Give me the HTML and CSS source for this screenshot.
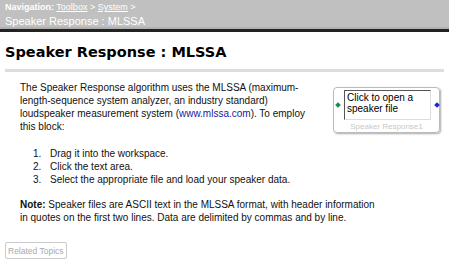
FILE: index.html
```html
<!DOCTYPE html>
<html>
<head>
<meta charset="utf-8">
<link rel="stylesheet" href="styles.css">
</head>
<body>
<div class="nav">
  <div class="nav-line small"><b>Navigation:</b> <a href="#">Toolbox</a> &gt; <a href="#">System</a> &gt;</div>
  <div class="nav-line">Speaker Response : MLSSA</div>
</div>
<h1 class="title">Speaker Response : MLSSA</h1>
<div class="content">
  <div class="intro">
    <p class="intro-text">The Speaker Response algorithm uses the MLSSA (maximum-length-sequence system analyzer, an industry standard) loudspeaker measurement system (<a href="#" class="plain">www.mlssa.com</a>). To employ this block:</p>
    <div class="widget">
      <span class="dot green"></span>
      <div class="textbox">Click to open a speaker file</div>
      <span class="dot blue"></span>
      <div class="wlabel">Speaker Response1</div>
    </div>
  </div>
  <ol class="steps">
    <li><span class="num">1.</span>Drag it into the workspace.</li>
    <li><span class="num">2.</span>Click the text area.</li>
    <li><span class="num">3.</span>Select the appropriate file and load your speaker data.</li>
  </ol>
  <p class="note"><b>Note:</b> Speaker files are ASCII text in the MLSSA format, with header information in quotes on the first two lines. Data are delimited by commas and by line.</p>
</div>
<button class="related">Related Topics</button>
</body>
</html>
```
FILE: styles.css
```css
html, body { margin: 0; padding: 0; background: #fff; }
body { font-family: "Liberation Sans", Tahoma, sans-serif; font-size: 10px; color: #111; width: 449px; height: 263px; overflow: hidden; }
.nav { background: #c0c0c0; color: #fff; padding: 2px 5px 0; height: 27px; border-bottom: 3px solid #222; box-shadow: inset 0 -2px 0 #b0b0b0; font-size: 11px; line-height: 13px; }
.nav a { color: #fff; }
.nav-line { white-space: nowrap; }
.nav-line.small { font-size: 9px; line-height: 11px; margin-bottom: 2px; }
.title { font-family: "DejaVu Sans", Verdana, sans-serif; font-size: 14.5px; font-weight: bold; margin: 10px 5px 0; padding-bottom: 7px; border-bottom: 3px solid #ddd; line-height: 20px; color: #000; }
.content { padding: 0 0 0 20px; }
.intro { display: flex; align-items: flex-start; margin-top: 9px; }
.intro-text { margin: 0; width: 300px; line-height: 13px; }
.plain { color: #1a1aa0; text-decoration: none; }
.widget { position: relative; margin: 6px 0 0 13px; width: 105px; height: 44px; border: 1px solid #bbb; border-radius: 4px; box-shadow: 1px 1px 2px #aaa; display: flex; align-items: flex-start; }
.textbox { margin: 2px 4px 0; width: 83px; height: 26px; border-top: 1px solid #555; border-left: 1px solid #555; border-right: 1px solid #ddd; border-bottom: 1px solid #ddd; font-size: 10px; line-height: 11px; padding: 1px 2px; box-sizing: content-box; color: #000; }
.dot { width: 4px; height: 4px; margin-top: 15px; transform: rotate(45deg); flex: none; }
.dot.green { background: #1a8a5a; margin-left: 2px; }
.dot.blue { background: #1a2ad0; }
.wlabel { position: absolute; left: 0; right: 0; bottom: 1px; text-align: center; color: #c8c8c8; font-size: 8px; line-height: 9px; }
.steps { margin: 14px 0 0; padding-left: 13px; list-style: none; line-height: 13px; }
.num { display: inline-block; width: 17px; }
.note { margin: 12px 0 0; line-height: 13px; width: 365px; }
.related { display: block; margin: 18px 0 0 5px; font-family: "Liberation Sans", sans-serif; font-size: 8.5px; color: #aaa; background: #fff; border: 1px solid #ccc; border-radius: 2px; padding: 1px 2px; height: 17px; }
```
